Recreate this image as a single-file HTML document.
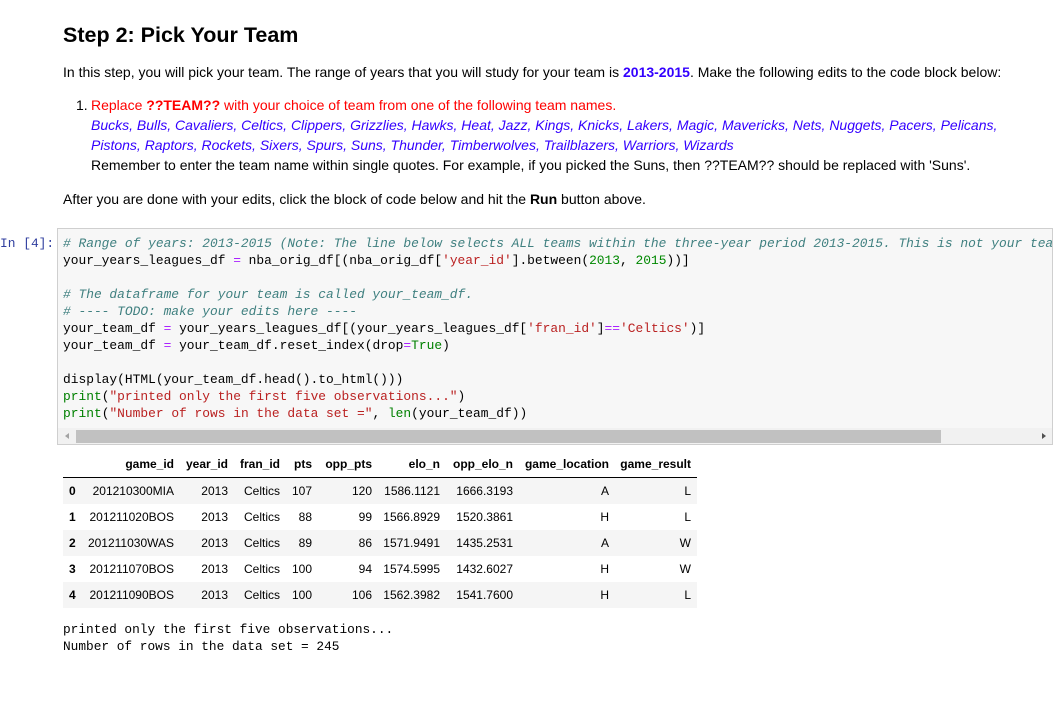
<!DOCTYPE html>
<html><head><meta charset="utf-8"><style>
body{margin:0;width:1063px;height:701px;background:#fff;font-family:"Liberation Sans",Arial,sans-serif;color:#000;position:relative;overflow:hidden}
.a{position:absolute;white-space:nowrap}
h2{margin:0;font-size:21.5px;font-weight:bold}
.t{font-size:14px}
.red{color:#f00}
.bl{color:#3300ff;font-style:italic}
.mono{font-family:"Liberation Mono",monospace;font-size:12.9px;line-height:17px;white-space:pre}
.c{color:#408080;font-style:italic}
.s{color:#ba2121}
.k{color:#008000}
.o{color:#aa22ff}
.n{color:#080}
table{border-collapse:collapse;table-layout:fixed;font-size:12px;font-family:"Liberation Sans",Arial,sans-serif}
td,th{text-align:right;padding:0 6px 0 0;height:26px;white-space:nowrap;overflow:hidden}
th{height:27px;border-bottom:1px solid #000}
tr.g td{background:#f5f5f5}
td.i{font-weight:bold;text-align:left;padding-left:6px}
</style></head><body>
<div class="a" style="left:63px;top:23px"><h2>Step 2: Pick Your Team</h2></div>
<div class="a t" style="left:63px;top:64px">In this step, you will pick your team. The range of years that you will study for your team is <b style="color:#3300ff">2013-2015</b>. Make the following edits to the code block below:</div>
<div class="a t" style="left:76px;top:97px">1.</div>
<div class="a t red" style="left:91px;top:97px">Replace <b>??TEAM??</b> with your choice of team from one of the following team names.</div>
<div class="a t bl" style="left:91px;top:117px">Bucks, Bulls, Cavaliers, Celtics, Clippers, Grizzlies, Hawks, Heat, Jazz, Kings, Knicks, Lakers, Magic, Mavericks, Nets, Nuggets, Pacers, Pelicans,</div>
<div class="a t bl" style="left:91px;top:137px">Pistons, Raptors, Rockets, Sixers, Spurs, Suns, Thunder, Timberwolves, Trailblazers, Warriors, Wizards</div>
<div class="a t" style="left:91px;top:157px">Remember to enter the team name within single quotes. For example, if you picked the Suns, then ??TEAM?? should be replaced with 'Suns'.</div>
<div class="a t" style="left:63px;top:191px">After you are done with your edits, click the block of code below and hit the <b>Run</b> button above.</div>

<div class="a mono" style="left:0;top:235px;color:#303f9f">In [4]:</div>
<div class="a" style="left:57px;top:228px;width:994px;height:215px;background:#f7f7f7;border:1px solid #cfcfcf;overflow:hidden">
<div class="a mono" style="left:5px;top:6px"><span class="c"># Range of years: 2013-2015 (Note: The line below selects ALL teams within the three-year period 2013-2015. This is not your team</span>
your_years_leagues_df <span class="o">=</span> nba_orig_df[(nba_orig_df[<span class="s">'year_id'</span>].between(<span class="n">2013</span>, <span class="n">2015</span>))]

<span class="c"># The dataframe for your team is called your_team_df.</span>
<span class="c"># ---- TODO: make your edits here ----</span>
your_team_df <span class="o">=</span> your_years_leagues_df[(your_years_leagues_df[<span class="s">'fran_id'</span>]<span class="o">==</span><span class="s">'Celtics'</span>)]
your_team_df <span class="o">=</span> your_team_df.reset_index(drop<span class="o">=</span><span class="k">True</span>)

display(HTML(your_team_df.head().to_html()))
<span class="k">print</span>(<span class="s">"printed only the first five observations..."</span>)
<span class="k">print</span>(<span class="s">"Number of rows in the data set ="</span>, <span class="k">len</span>(your_team_df))</div>
<div class="a" style="left:0;top:199px;width:994px;height:16px;background:#f1f1f1"></div>
<div class="a" style="left:18px;top:201px;width:865px;height:13px;background:#c1c1c1"></div>
<div class="a" style="left:7px;top:204px;width:0;height:0;border-top:3px solid transparent;border-bottom:3px solid transparent;border-right:4px solid #a3a3a3"></div>
<div class="a" style="left:984px;top:204px;width:0;height:0;border-top:3px solid transparent;border-bottom:3px solid transparent;border-left:4px solid #505050"></div>
</div>

<div class="a" style="left:63px;top:450px">
<table style="width:634px">
<colgroup><col style="width:19px"><col style="width:98px"><col style="width:54px"><col style="width:52px"><col style="width:32px"><col style="width:60px"><col style="width:68px"><col style="width:73px"><col style="width:96px"><col style="width:82px"></colgroup>
<tr><th></th><th>game_id</th><th>year_id</th><th>fran_id</th><th>pts</th><th>opp_pts</th><th>elo_n</th><th>opp_elo_n</th><th>game_location</th><th>game_result</th></tr>
<tr class="g"><td class="i">0</td><td>201210300MIA</td><td>2013</td><td>Celtics</td><td>107</td><td>120</td><td>1586.1121</td><td>1666.3193</td><td>A</td><td>L</td></tr>
<tr><td class="i">1</td><td>201211020BOS</td><td>2013</td><td>Celtics</td><td>88</td><td>99</td><td>1566.8929</td><td>1520.3861</td><td>H</td><td>L</td></tr>
<tr class="g"><td class="i">2</td><td>201211030WAS</td><td>2013</td><td>Celtics</td><td>89</td><td>86</td><td>1571.9491</td><td>1435.2531</td><td>A</td><td>W</td></tr>
<tr><td class="i">3</td><td>201211070BOS</td><td>2013</td><td>Celtics</td><td>100</td><td>94</td><td>1574.5995</td><td>1432.6027</td><td>H</td><td>W</td></tr>
<tr class="g"><td class="i">4</td><td>201211090BOS</td><td>2013</td><td>Celtics</td><td>100</td><td>106</td><td>1562.3982</td><td>1541.7600</td><td>H</td><td>L</td></tr>
</table></div>
<div class="a mono" style="left:63px;top:621px;font-size:12.8px">printed only the first five observations...
Number of rows in the data set = 245</div>
</body></html>
